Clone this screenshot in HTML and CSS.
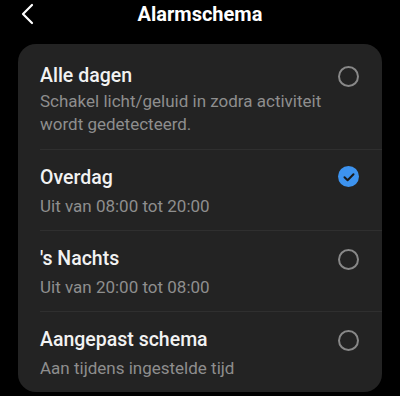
FILE: index.html
```html
<!DOCTYPE html>
<html>
<head>
<meta charset="utf-8">
<link rel="stylesheet" href="styles.css">
</head>
<body>
<div class="screen">
  <header class="topbar">
    <svg class="back" width="14" height="22" viewBox="0 0 14 22"><path d="M12 2 L3 11 L12 20" fill="none" stroke="#fff" stroke-width="2.2" stroke-linecap="round" stroke-linejoin="round"/></svg>
    <h1 class="title">Alarmschema</h1>
  </header>
  <div class="card">
    <div class="row first">
      <div class="text">
        <div class="label">Alle dagen</div>
        <div class="sub">Schakel licht/geluid in zodra activiteit wordt gedetecteerd.</div>
      </div>
      <span class="radio"></span>
    </div>
    <div class="row">
      <div class="text">
        <div class="label">Overdag</div>
        <div class="sub">Uit van 08:00 tot 20:00</div>
      </div>
      <span class="radio checked"><svg width="20" height="20" viewBox="0 0 20 20"><path d="M5.5 10.2 L8.6 13.2 L14.5 7.2" fill="none" stroke="#1a1a1a" stroke-width="2" stroke-linecap="round" stroke-linejoin="round"/></svg></span>
    </div>
    <div class="row">
      <div class="text">
        <div class="label">'s Nachts</div>
        <div class="sub">Uit van 20:00 tot 08:00</div>
      </div>
      <span class="radio"></span>
    </div>
    <div class="row last">
      <div class="text">
        <div class="label">Aangepast schema</div>
        <div class="sub">Aan tijdens ingestelde tijd</div>
      </div>
      <span class="radio"></span>
    </div>
  </div>
</div>
</body>
</html>
```

FILE: styles.css
```css
html, body {
  margin: 0;
  padding: 0;
  background: #000;
}
body {
  font-family: Roboto, "Noto Sans", sans-serif;
  color: #fff;
  width: 400px;
  height: 396px;
  overflow: hidden;
}
.screen {
  display: flex;
  flex-direction: column;
}
.topbar {
  position: relative;
  height: 44px;
  display: flex;
  align-items: flex-start;
  justify-content: center;
}
.back {
  position: absolute;
  left: 20px;
  top: 3px;
}
.title {
  margin: 0;
  font-size: 20px;
  font-weight: 700;
  line-height: 28px;
  color: #fff;
}
.card {
  margin: 0 18px;
  background: #232323;
  border-radius: 18px;
  height: 348px;
}
.row {
  display: flex;
  align-items: flex-start;
  padding: 16px 23px 12px 0;
  margin-left: 22px;
  border-bottom: 1px solid #2f2f2f;
}
.row.first {
  padding-top: 20px;
  padding-bottom: 13px;
}
.row.last {
  border-bottom: none;
}
.text {
  flex: 1;
}
.label {
  font-size: 19.5px;
  font-weight: 500;
  line-height: 24px;
  color: #f2f2f2;
  margin-bottom: 5px;
}
.first .label {
  margin-bottom: 2px;
}
.sub {
  font-size: 17px;
  line-height: 23px;
  color: #8e8e8e;
  max-width: 300px;
}
.radio {
  width: 17px;
  height: 17px;
  border: 2px solid #888;
  border-radius: 50%;
  margin-top: 2px;
  flex: none;
}
.radio.checked {
  width: 21px;
  height: 21px;
  margin-top: 0;
  border: none;
  background: #3d93ef;
  display: flex;
  align-items: center;
  justify-content: center;
}
```
